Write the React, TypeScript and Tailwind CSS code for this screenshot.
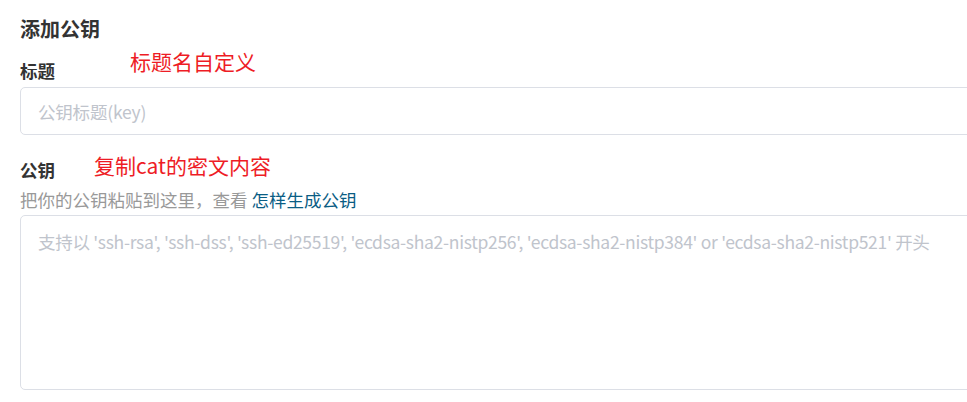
export default function App() {
  return (
    <div
      className="w-screen h-screen overflow-hidden bg-white text-[#333]"
      style={{ fontFamily: '"Noto Sans CJK SC", "Noto Sans", sans-serif' }}
    >
      <div className="w-[1000px] pl-[20px] pt-[16px]">
        <h3 className="text-[20px] leading-[26px] font-bold">添加公钥</h3>

        <div className="mt-[5px] flex items-end">
          <label className="text-[17.5px] leading-[24px] font-bold">标题</label>
          <span className="ml-[75px] mb-[8px] text-[21px] leading-[28px] text-[#ee1c25]">标题名自定义</span>
        </div>
        <input
          className="mt-[4px] block w-full h-[48px] rounded-[5px] border border-[#dcdfe6] px-[17px] text-[17.5px] tracking-[-0.2px] outline-none placeholder:text-[#c0c4cc]"
          placeholder="公钥标题(key)"
        />

        <div className="mt-[16px] flex items-end">
          <label className="text-[17.5px] leading-[24px] font-bold">公钥</label>
          <span className="ml-[39px] mb-[3px] text-[21px] leading-[28px] text-[#ee1c25]">复制cat的密文内容</span>
        </div>
        <p className="mt-[6px] text-[17.5px] leading-[24px] text-[#999]">
          把你的公钥粘贴到这里，查看 <a className="text-[#0a5d84]">怎样生成公钥</a>
        </p>
        <textarea
          className="mt-[3px] block w-full h-[175px] resize-none rounded-[5px] border border-[#dcdfe6] px-[17px] pt-[14px] text-[17.5px] leading-[24px] tracking-[-0.3px] outline-none placeholder:text-[#c0c4cc]"
          placeholder="支持以 'ssh-rsa', 'ssh-dss', 'ssh-ed25519', 'ecdsa-sha2-nistp256', 'ecdsa-sha2-nistp384' or 'ecdsa-sha2-nistp521' 开头"
        />
      </div>
    </div>
  )
}
